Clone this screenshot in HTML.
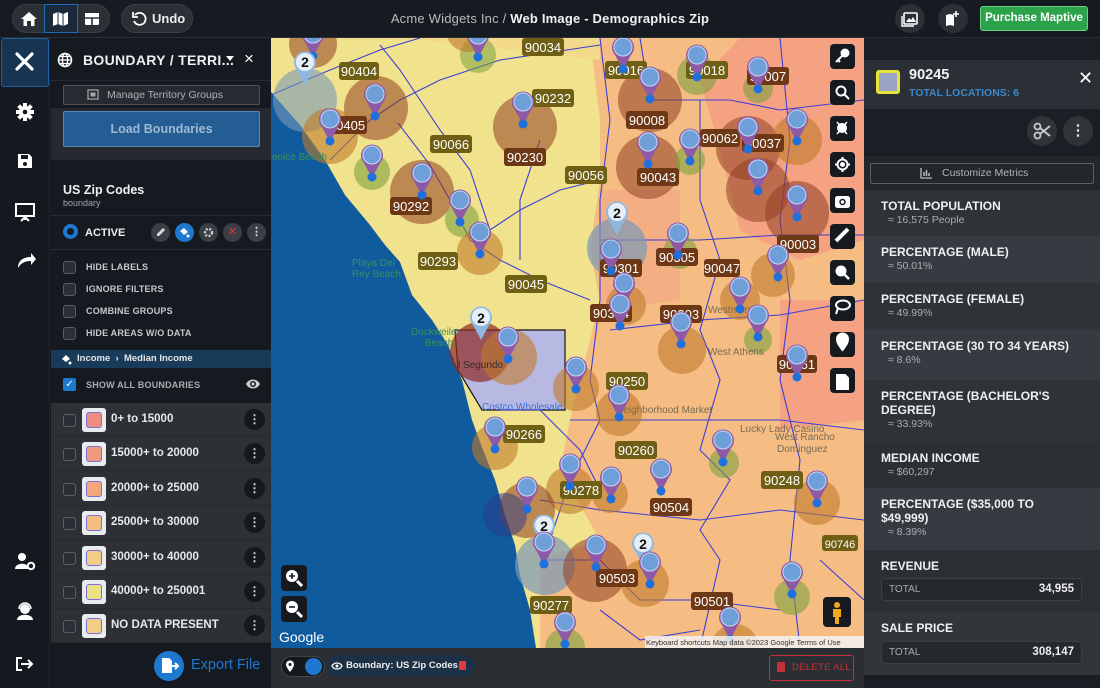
<!DOCTYPE html>
<html><head><meta charset="utf-8"><style>
*{box-sizing:border-box;margin:0;padding:0}
body{width:1100px;height:688px;overflow:hidden;background:#13181e;font-family:"Liberation Sans",sans-serif;color:#e6e8ea;position:relative}
.abs{position:absolute}
.top{left:0;top:0;width:1100px;height:38px;background:#161b21;border-bottom:1px solid #2a2f35}
.pill{background:#2b3036;border:1px solid #3a3f45;border-radius:16px}
.rail{left:0;top:38px;width:50px;height:650px;background:#14191f;border-right:1px solid #22272d}
.panel{left:51px;top:38px;width:220px;height:650px;background:#141a20}
.cb{width:13px;height:13px;border:1.5px solid #5a5f65;border-radius:3px;background:#2a2f35}
.small{font-size:9px;font-weight:bold;color:#c4c8cc;letter-spacing:.2px}
.item{left:0;width:220px;height:34px;background:#2d3136;border-bottom:1px solid #262a2f}
.sw{left:31px;top:5px;width:24px;height:24px;border-radius:3px;background:#e9ecef}
.sw i{position:absolute;left:4px;top:4px;width:16px;height:16px;border:1.5px solid #7b6fd8;border-radius:3px}
.dots{right:6px;top:6px;width:21px;height:21px;border-radius:50%;background:#15191e;color:#ddd;font-size:12px;text-align:center;line-height:21px;font-weight:bold}
.rp{left:864px;top:38px;width:236px;height:650px;background:#1a1f25}
.met{left:0;width:236px;padding:9px 0 0 17px}
.met b{display:block;font-size:12px;color:#eef0f2;line-height:14px}
.met span{display:block;font-size:10.5px;color:#a9adb2;padding-left:7px;margin-top:1px}
.tot{left:17px;width:201px;height:23px;background:#25292e;border:1px solid #3b4046;border-radius:4px;font-size:10px;color:#aaa}
.tb{left:830px;width:25px;height:25px;background:#161a1f;border-radius:4px}
</style></head><body>

<div class="abs top"></div>
<div class="abs pill" style="left:12px;top:4px;width:98px;height:29px"></div>
<div class="abs" style="left:44px;top:4px;width:34px;height:29px;background:#1b2a3a;border:1px solid #1e6bb8"></div>
<svg class="abs" style="left:19px;top:9px" width="80" height="20" viewBox="0 0 80 20">
<path d="M10 3 L2 10 H4.5 V17 H8 V12 H12 V17 H15.5 V10 H18 Z" fill="#fff"/>
<path d="M34 5 L39 3 L44 5 L49 3 V15 L44 17 L39 15 L34 17Z" fill="#fff"/><path d="M39 3V15M44 5V17" stroke="#1b2a3a" stroke-width="1"/>
<rect x="66" y="4" width="14" height="12" rx="1.5" fill="#fff"/><path d="M66 9H80M73 9V16" stroke="#2b3036" stroke-width="1.6"/><rect x="66" y="4" width="14" height="3" fill="#fff"/>
</svg>
<div class="abs pill" style="left:121px;top:4px;width:72px;height:29px;font-size:13px;font-weight:bold;line-height:27px;padding-left:30px;color:#eee">Undo</div>
<svg class="abs" style="left:131px;top:11px" width="16" height="16" viewBox="0 0 16 16"><path d="M4 4 A6 6 0 1 1 3 10" fill="none" stroke="#fff" stroke-width="1.8"/><path d="M2 1V6H7" fill="none" stroke="#fff" stroke-width="1.8"/></svg>
<div class="abs" style="left:380px;top:11px;width:340px;text-align:center;font-size:13px;color:#b8bcc0;letter-spacing:.2px">Acme Widgets Inc / <b style="color:#f2f2f2">Web Image - Demographics Zip</b></div>
<div class="abs" style="left:895px;top:4px;width:30px;height:29px;border-radius:50%;background:#2b3036"></div>
<div class="abs" style="left:938px;top:4px;width:30px;height:29px;border-radius:50%;background:#2b3036"></div>
<svg class="abs" style="left:900px;top:9px" width="70" height="20"><rect x="4" y="4" width="13" height="11" rx="1" fill="none" stroke="#fff" stroke-width="1.6"/><path d="M6 13 L9 9 L11 11 L13 8 L16 13Z" fill="#fff"/><path d="M2 7V17H14" fill="none" stroke="#fff" stroke-width="1.4"/>
<path d="M46 6 L50 5 L54 6 V17 L50 16 L46 17Z" fill="#fff"/><path d="M56 2V8M53 5H59" stroke="#fff" stroke-width="1.6"/></svg>
<div class="abs" style="left:980px;top:6px;width:108px;height:25px;background:#2ca24a;border:1px solid #6fcf86;border-radius:3px;font-size:11.5px;font-weight:bold;color:#fff;text-align:center;line-height:23px">Purchase Maptive</div>

<div class="abs rail"></div>
<div class="abs" style="left:1px;top:38px;width:48px;height:49px;background:#173553;border:1px solid #1d5f9f;border-radius:3px"></div>
<svg class="abs" style="left:0;top:38px" width="50" height="650" viewBox="0 0 50 650">
<path d="M17 16 L32 31 M32 16 L17 31" stroke="#fff" stroke-width="3.2" stroke-linecap="round"/>
<g fill="#fff"><circle cx="25" cy="74" r="6"/><rect x="23" y="65" width="4" height="18"/><rect x="16" y="72" width="18" height="4"/><rect x="23" y="65" width="4" height="18" transform="rotate(45 25 74)"/><rect x="23" y="65" width="4" height="18" transform="rotate(-45 25 74)"/></g><circle cx="25" cy="74" r="2.3" fill="#14191f"/>
<path d="M18 116 H29 L32 119 V130 H18Z" fill="#fff"/><rect x="21" y="117" width="7" height="4" fill="#14191f"/><circle cx="25" cy="126" r="2" fill="#14191f"/>
<rect x="16" y="166" width="18" height="12" fill="none" stroke="#fff" stroke-width="2"/><path d="M25 178 V182 M21 183 L25 179 L29 183" stroke="#fff" stroke-width="2" fill="none"/>
<path d="M18 230 C18 222 24 219 31 219 V215 L36 221 L31 227 V223 C25 223 21 225 18 230Z" fill="#fff"/>
<circle cx="22" cy="519" r="4" fill="#fff"/><path d="M15 531 C15 524 29 524 29 531Z" fill="#fff"/><circle cx="31" cy="528" r="3.2" fill="none" stroke="#fff" stroke-width="2"/>
<circle cx="25" cy="571" r="5" fill="#fff"/><path d="M17 582 C17 575 33 575 33 582Z" fill="#fff"/><path d="M19 571 A6 6 0 0 1 31 571" fill="none" stroke="#fff" stroke-width="1.5"/>
<path d="M22 620 H17 V632 H22" fill="none" stroke="#fff" stroke-width="2"/><path d="M21 626 H32 M28 622 L32 626 L28 630" fill="none" stroke="#fff" stroke-width="2"/>
</svg>

<div class="abs panel">
  <svg class="abs" style="left:6px;top:14px" width="16" height="16" viewBox="0 0 16 16"><circle cx="8" cy="8" r="6.5" fill="none" stroke="#fff" stroke-width="1.6"/><ellipse cx="8" cy="8" rx="2.6" ry="6.5" fill="none" stroke="#fff" stroke-width="1.4"/><path d="M1.5 8H14.5M3 4.5H13M3 11.5H13" stroke="#fff" stroke-width="1.2"/></svg>
  <div class="abs" style="left:32px;top:14px;font-size:14px;font-weight:bold;color:#f0f0f0;letter-spacing:.3px">BOUNDARY / TERRI...</div>
  <div class="abs" style="left:175px;top:18px;width:0;height:0;border-left:4px solid transparent;border-right:4px solid transparent;border-top:5px solid #fff"></div>
  <div class="abs" style="left:193px;top:11px;font-size:17px;color:#fff">×</div>
  <div class="abs" style="left:0;top:42px;width:220px;height:1px;background:#272c32"></div>
  <div class="abs" style="left:12px;top:47px;width:197px;height:20px;border:1px solid #4f545a;background:#262b31;border-radius:2px;font-size:10.5px;color:#aeb2b6;line-height:18px;padding-left:43px">Manage Territory Groups</div>
  <svg class="abs" style="left:36px;top:51px" width="12" height="11"><rect x="1" y="1" width="10" height="9" fill="none" stroke="#aaa" stroke-width="1.2"/><rect x="3.5" y="3.5" width="5" height="4" fill="#aaa"/></svg>
  <div class="abs" style="left:0;top:70px;width:220px;height:52px;background:#262a30"></div>
  <div class="abs" style="left:12px;top:73px;width:197px;height:36px;background:#245d94;border:1px solid #5488b8;border-radius:2px;font-size:12.5px;font-weight:bold;color:#9fb9d2;text-align:center;line-height:34px">Load Boundaries</div>
  <div class="abs" style="left:12px;top:145px;font-size:12.5px;font-weight:bold;color:#f0f0f0">US Zip Codes</div>
  <div class="abs" style="left:12px;top:160px;font-size:9px;color:#a2a6aa">boundary</div>
  <div class="abs" style="left:0;top:177px;width:220px;height:1px;background:#272c32"></div>
  <div class="abs" style="left:12px;top:186px;width:15px;height:15px;border-radius:50%;border:4px solid #1e78d0"></div>
  <div class="abs" style="left:34px;top:189px;font-size:11px;font-weight:bold;color:#eee">ACTIVE</div>
  <div class="abs" style="left:100px;top:185px;width:19px;height:19px;border-radius:50%;background:#3a3f45"></div>
  <div class="abs" style="left:124px;top:185px;width:19px;height:19px;border-radius:50%;background:#1e78d0"></div>
  <div class="abs" style="left:148px;top:185px;width:19px;height:19px;border-radius:50%;background:#3a3f45"></div>
  <div class="abs" style="left:172px;top:185px;width:19px;height:19px;border-radius:50%;background:#3a3f45;color:#e0353a;font-size:11px;text-align:center;line-height:19px">✕</div>
  <div class="abs" style="left:196px;top:185px;width:19px;height:19px;border-radius:50%;background:#3a3f45;color:#ddd;font-size:11px;text-align:center;line-height:19px;font-weight:bold">⋮</div>
  <svg class="abs" style="left:100px;top:185px" width="80" height="19"><path d="M6 13 L6 11 L12 5 L14 7 L8 13Z" fill="#ddd"/><path d="M29 8 L33 5 L37 9 L33 12Z" fill="#fff"/><circle cx="37" cy="13" r="1.5" fill="#fff"/><circle cx="57.5" cy="9.5" r="3.5" fill="none" stroke="#ccc" stroke-width="2.4" stroke-dasharray="2 1.4"/></svg>
  <div class="abs" style="left:0;top:211px;width:220px;height:1px;background:#272c32"></div>
  <div class="abs cb" style="left:12px;top:223px"></div><div class="abs small" style="left:35px;top:224px">HIDE LABELS</div>
  <div class="abs cb" style="left:12px;top:245px"></div><div class="abs small" style="left:35px;top:246px">IGNORE FILTERS</div>
  <div class="abs cb" style="left:12px;top:267px"></div><div class="abs small" style="left:35px;top:268px">COMBINE GROUPS</div>
  <div class="abs cb" style="left:12px;top:289px"></div><div class="abs small" style="left:35px;top:290px">HIDE AREAS W/O DATA</div>
  <div class="abs" style="left:0;top:312px;width:220px;height:18px;background:#183b5a;font-size:9.5px;font-weight:bold;color:#e6e6e6;line-height:18px;padding-left:26px">Income &nbsp;›&nbsp; Median Income</div>
  <svg class="abs" style="left:9px;top:315px" width="12" height="12"><path d="M2 6 L6 2 L10 6 L6 9Z" fill="#fff"/><circle cx="10" cy="10" r="1.5" fill="#fff"/></svg>
  <div class="abs" style="left:12px;top:340px;width:13px;height:13px;background:#1e78d0;border-radius:2px;color:#fff;font-size:10px;text-align:center;line-height:13px">✓</div>
  <div class="abs small" style="left:35px;top:342px;color:#a8acb0">SHOW ALL BOUNDARIES</div>
  <svg class="abs" style="left:194px;top:340px" width="16" height="12"><path d="M1 6 C4 0 12 0 15 6 C12 12 4 12 1 6Z" fill="#ccc"/><circle cx="8" cy="6" r="3" fill="#141a20"/><circle cx="8" cy="6" r="1.6" fill="#ccc"/></svg>
  <div class="abs" style="left:0;top:365px;width:220px;height:240px;background:#2d3136"></div>
</div>
<div class="abs" style="left:51px;top:403px;width:220px;height:240px">
 <div class="abs item" style="top:0"><div class="abs cb" style="left:12px;top:11px"></div><div class="abs sw"><i style="background:#ee8d80"></i></div><div class="abs" style="left:60px;top:10px;font-size:11.5px;font-weight:bold">0+ to 15000</div><div class="abs dots">⋮</div></div>
 <div class="abs item" style="top:34.4px"><div class="abs cb" style="left:12px;top:11px"></div><div class="abs sw"><i style="background:#ef9a7e"></i></div><div class="abs" style="left:60px;top:10px;font-size:11.5px;font-weight:bold">15000+ to 20000</div><div class="abs dots">⋮</div></div>
 <div class="abs item" style="top:68.8px"><div class="abs cb" style="left:12px;top:11px"></div><div class="abs sw"><i style="background:#f2a77d"></i></div><div class="abs" style="left:60px;top:10px;font-size:11.5px;font-weight:bold">20000+ to 25000</div><div class="abs dots">⋮</div></div>
 <div class="abs item" style="top:103.2px"><div class="abs cb" style="left:12px;top:11px"></div><div class="abs sw"><i style="background:#f3bd80"></i></div><div class="abs" style="left:60px;top:10px;font-size:11.5px;font-weight:bold">25000+ to 30000</div><div class="abs dots">⋮</div></div>
 <div class="abs item" style="top:137.6px"><div class="abs cb" style="left:12px;top:11px"></div><div class="abs sw"><i style="background:#f1cd85"></i></div><div class="abs" style="left:60px;top:10px;font-size:11.5px;font-weight:bold">30000+ to 40000</div><div class="abs dots">⋮</div></div>
 <div class="abs item" style="top:172px"><div class="abs cb" style="left:12px;top:11px"></div><div class="abs sw"><i style="background:#ece086"></i></div><div class="abs" style="left:60px;top:10px;font-size:11.5px;font-weight:bold">40000+ to 250001</div><div class="abs dots">⋮</div></div>
 <div class="abs item" style="top:206.4px"><div class="abs cb" style="left:12px;top:11px"></div><div class="abs sw"><i style="background:#f1cd85"></i></div><div class="abs" style="left:60px;top:10px;font-size:11.5px;font-weight:bold">NO DATA PRESENT</div><div class="abs dots">⋮</div></div>
</div>
<div class="abs" style="left:154px;top:651px;width:30px;height:30px;border-radius:50%;background:#1e78d0"></div>
<svg class="abs" style="left:160px;top:657px" width="20" height="18"><path d="M2 1 H9 L12 4 V16 H2Z" fill="#fff"/><path d="M10 9 H18 M15 6 L18 9 L15 12" stroke="#fff" stroke-width="2" fill="none"/></svg>
<div class="abs" style="left:191px;top:657px;font-size:14.5px;color:#1e78d0">Export File</div>

<svg class="abs" style="left:271px;top:38px" width="593" height="610" viewBox="271 38 593 610">
<defs>
<g id="p"><path d="M0,0 L-8,-15 A11,11 0 1 1 8,-15 Z" fill="#8e5aa8"/><circle cx="0" cy="-23" r="9" fill="#6f9fd8"/><circle cx="0" cy="-23" r="9" fill="none" stroke="#c9d9f0" stroke-width="1"/><circle cx="0" cy="-1" r="4.5" fill="#1f6fdc"/></g>
<g id="p2"><path d="M0,0 L-8,-15 A11,11 0 1 1 8,-15 Z" fill="#8fb7e0"/><circle cx="0" cy="-23" r="9" fill="#e6eef8"/></g>
</defs>
<rect x="271" y="38" width="593" height="610" fill="#f1e38d"/>
<path d="M590 38 H864 V648 H540 L540 560 L600 540 L560 470 L570 420 L600 300 L590 250 L600 180 L600 120Z" fill="#f5bd84"/>
<path d="M740 38 H864 V240 L800 260 L740 230 L720 150 L700 80Z" fill="#f5a283"/>
<path d="M780 300 H864 V420 L780 430Z" fill="#f5a283"/>
<path d="M600 190 H680 V300 L600 310Z" fill="#f4ae84"/>
<path d="M285 38 H600 V60 L420 40Z" fill="#f3d98a"/>
<path d="M271 92 L300 125 L325 160 L345 195 L370 225 L385 245 L400 262 L412 295 L432 320 L448 345 L462 380 L472 420 L483 450 L495 480 L505 515 L515 545 L520 575 L530 610 L536 648 L271 648Z" fill="#0f5b9e"/>
<path d="M455 330 L565 330 L565 410 L482 410 L458 370Z" fill="#b8b9e2" stroke="#111" stroke-width="1.2"/>
<g fill="none" stroke="#3d3fd6" stroke-width="1.1">
<path d="M271 95 L330 70 L380 50 L420 38"/><path d="M330 160 L370 120 L400 100 L440 80 L500 60 L600 45"/>
<path d="M380 45 L400 70 L420 100 L440 130 L470 170 L490 230 L520 210 L560 190 L600 180"/>
<path d="M398 123 L430 165 L450 200 L470 240 L500 260 L540 280 L590 300"/>
<path d="M600 38 L610 120 L600 200 L600 300 L590 380 L600 420 L570 480 L550 540"/>
<path d="M640 38 L650 100 L700 100 L730 100 L780 110 L864 100"/>
<path d="M700 100 L700 200 L720 260 L700 330 L720 380 L700 450 L730 480 L700 530 L720 560 L700 648"/>
<path d="M780 38 L790 140 L780 220 L790 300 L780 380 L800 460 L790 560 L800 648"/>
<path d="M600 240 H700 L780 235 H864"/><path d="M610 330 L700 320 L780 315 L864 300"/>
<path d="M570 420 H700 L780 420 L864 430"/><path d="M540 500 L600 510 L700 520 L780 510 L864 520"/>
<path d="M500 410 L540 410 L580 450 L600 490"/><path d="M540 560 L600 560 L640 600 L700 600 L780 610"/>
<path d="M600 610 L640 640 L700 630"/><path d="M820 560 L864 600"/><path d="M540 140 L520 200 L520 260"/>
</g>
<g>
<circle cx="313" cy="44" r="24" fill="#8f3f22" fill-opacity=".55"/>
<circle cx="305" cy="100" r="32" fill="#7a98b8" fill-opacity=".6"/>
<circle cx="376" cy="108" r="32" fill="#8f3f22" fill-opacity=".55"/>
<circle cx="330" cy="136" r="28" fill="#c07a2a" fill-opacity=".6"/>
<circle cx="372" cy="172" r="18" fill="#7da040" fill-opacity=".6"/>
<circle cx="422" cy="192" r="32" fill="#8f3f22" fill-opacity=".55"/>
<circle cx="462" cy="220" r="17" fill="#7da040" fill-opacity=".6"/>
<circle cx="480" cy="252" r="23" fill="#c07a2a" fill-opacity=".6"/>
<circle cx="478" cy="55" r="18" fill="#7da040" fill-opacity=".55"/>
<circle cx="525" cy="127" r="32" fill="#8f3f22" fill-opacity=".55"/>
<circle cx="468" cy="30" r="22" fill="#c07a2a" fill-opacity=".6"/>
<circle cx="650" cy="100" r="32" fill="#8f3f22" fill-opacity=".55"/>
<circle cx="697" cy="75" r="20" fill="#7da040" fill-opacity=".6"/>
<circle cx="758" cy="88" r="15" fill="#7da040" fill-opacity=".6"/>
<circle cx="648" cy="167" r="32" fill="#8f3f22" fill-opacity=".55"/>
<circle cx="690" cy="160" r="15" fill="#7da040" fill-opacity=".6"/>
<circle cx="748" cy="148" r="32" fill="#8f3f22" fill-opacity=".55"/>
<circle cx="797" cy="140" r="25" fill="#c07a2a" fill-opacity=".6"/>
<circle cx="758" cy="190" r="32" fill="#8f3f22" fill-opacity=".55"/>
<circle cx="797" cy="213" r="32" fill="#8f3f22" fill-opacity=".55"/>
<circle cx="617" cy="248" r="30" fill="#7a98b8" fill-opacity=".7"/>
<circle cx="680" cy="252" r="17" fill="#7da040" fill-opacity=".6"/>
<circle cx="626" cy="305" r="20" fill="#c07a2a" fill-opacity=".6"/>
<circle cx="682" cy="350" r="24" fill="#c07a2a" fill-opacity=".6"/>
<circle cx="758" cy="340" r="14" fill="#7da040" fill-opacity=".6"/>
<circle cx="740" cy="300" r="20" fill="#c07a2a" fill-opacity=".6"/>
<circle cx="773" cy="275" r="22" fill="#c07a2a" fill-opacity=".6"/>
<circle cx="480" cy="352" r="30" fill="#8f2a22" fill-opacity=".7"/>
<circle cx="509" cy="357" r="28" fill="#c07a2a" fill-opacity=".6"/>
<circle cx="576" cy="388" r="23" fill="#c07a2a" fill-opacity=".6"/>
<circle cx="619" cy="413" r="23" fill="#c07a2a" fill-opacity=".6"/>
<circle cx="495" cy="447" r="23" fill="#c07a2a" fill-opacity=".6"/>
<circle cx="570" cy="490" r="24" fill="#c07a2a" fill-opacity=".6"/>
<circle cx="610" cy="495" r="18" fill="#c07a2a" fill-opacity=".6"/>
<circle cx="724" cy="463" r="15" fill="#7da040" fill-opacity=".6"/>
<circle cx="817" cy="502" r="23" fill="#c07a2a" fill-opacity=".6"/>
<circle cx="527" cy="510" r="28" fill="#8f3f22" fill-opacity=".55"/>
<circle cx="505" cy="515" r="22" fill="#2a3a8a" fill-opacity=".5"/>
<circle cx="545" cy="565" r="30" fill="#7a98b8" fill-opacity=".7"/>
<circle cx="595" cy="570" r="32" fill="#8f3f22" fill-opacity=".55"/>
<circle cx="645" cy="583" r="24" fill="#c07a2a" fill-opacity=".6"/>
<circle cx="792" cy="597" r="18" fill="#7da040" fill-opacity=".6"/>
<circle cx="735" cy="648" r="24" fill="#c07a2a" fill-opacity=".6"/>
<circle cx="565" cy="648" r="20" fill="#7da040" fill-opacity=".6"/>
</g>
<g font-family="Liberation Sans, sans-serif" font-size="13" fill="#fff" text-anchor="middle">
<g fill="#6e5f14"><rect x="339" y="62" width="40" height="18" rx="3"/><rect x="522" y="38" width="42" height="18" rx="3"/><rect x="605" y="61" width="42" height="18" rx="3"/><rect x="686" y="61" width="42" height="18" rx="3"/><rect x="532" y="89" width="42" height="18" rx="3"/><rect x="430" y="135" width="42" height="18" rx="3"/><rect x="565" y="166" width="42" height="18" rx="3"/><rect x="418" y="252" width="40" height="18" rx="3"/><rect x="505" y="275" width="42" height="18" rx="3"/><rect x="606" y="372" width="42" height="18" rx="3"/><rect x="503" y="425" width="42" height="18" rx="3"/><rect x="615" y="441" width="42" height="18" rx="3"/><rect x="560" y="481" width="42" height="18" rx="3"/><rect x="761" y="471" width="42" height="18" rx="3"/><rect x="822" y="535" width="36" height="16" rx="3"/><rect x="530" y="596" width="42" height="18" rx="3"/></g>
<g fill="#6e3816"><rect x="747" y="67" width="42" height="18" rx="3"/><rect x="327" y="116" width="40" height="18" rx="3"/><rect x="626" y="111" width="42" height="18" rx="3"/><rect x="700" y="129" width="40" height="18" rx="3"/><rect x="742" y="134" width="42" height="18" rx="3"/><rect x="504" y="148" width="42" height="18" rx="3"/><rect x="637" y="168" width="42" height="18" rx="3"/><rect x="390" y="197" width="42" height="18" rx="3"/><rect x="777" y="235" width="42" height="18" rx="3"/><rect x="656" y="248" width="42" height="18" rx="3"/><rect x="704" y="259" width="36" height="18" rx="3"/><rect x="600" y="259" width="42" height="18" rx="3"/><rect x="590" y="304" width="42" height="18" rx="3"/><rect x="660" y="305" width="42" height="18" rx="3"/><rect x="777" y="355" width="40" height="18" rx="3"/><rect x="650" y="498" width="42" height="18" rx="3"/><rect x="596" y="569" width="42" height="18" rx="3"/><rect x="691" y="592" width="42" height="18" rx="3"/></g>
<text x="359" y="76">90404</text><text x="543" y="52">90034</text><text x="626" y="75">90016</text><text x="707" y="75">90018</text><text x="768" y="81">90007</text><text x="347" y="130">90405</text><text x="553" y="103">90232</text><text x="647" y="125">90008</text><text x="451" y="149">90066</text><text x="720" y="143">90062</text><text x="763" y="148">90037</text><text x="525" y="162">90230</text><text x="586" y="180">90056</text><text x="658" y="182">90043</text><text x="411" y="211">90292</text><text x="438" y="266">90293</text><text x="526" y="289">90045</text><text x="798" y="249">90003</text><text x="677" y="262">90305</text><text x="722" y="273">90047</text><text x="621" y="273">90301</text><text x="611" y="318">90304</text><text x="681" y="319">90303</text><text x="797" y="369">90061</text><text x="627" y="386">90250</text><text x="524" y="439">90266</text><text x="636" y="455">90260</text><text x="581" y="495">90278</text><text x="782" y="485">90248</text><text x="671" y="512">90504</text><text x="840" y="548" font-size="11">90746</text><text x="617" y="583">90503</text><text x="551" y="610">90277</text><text x="712" y="606">90501</text>
</g>
<g font-family="Liberation Sans, sans-serif" font-size="10" fill="#3d8f5a"><text x="352" y="266">Playa Del</text><text x="352" y="277">Rey Beach</text><text x="411" y="335">Dockweiler</text><text x="425" y="346">Beach</text><text x="272" y="160">enice Beach</text></g>
<g font-family="Liberation Sans, sans-serif" font-size="10" fill="#7a6a50"><text x="708" y="313">Westmont</text><text x="708" y="355">West Athens</text><text x="616" y="413">Neighborhood Market</text><text x="740" y="432">Lucky Lady Casino</text><text x="775" y="440">West Rancho</text><text x="777" y="452">Dominguez</text><text x="482" y="410" fill="#3f6fd6">Costco Wholesale</text><text x="458" y="368" fill="#3a2a2a">l Segundo</text></g>
<use href="#p" x="313" y="57"/><use href="#p2" x="305" y="85"/><use href="#p" x="375" y="117"/><use href="#p" x="330" y="142"/><use href="#p" x="372" y="178"/><use href="#p" x="422" y="196"/><use href="#p" x="460" y="223"/><use href="#p" x="480" y="255"/><use href="#p" x="478" y="58"/><use href="#p" x="523" y="125"/><use href="#p" x="623" y="70"/><use href="#p" x="650" y="100"/><use href="#p" x="697" y="78"/><use href="#p" x="758" y="90"/><use href="#p" x="648" y="165"/><use href="#p" x="690" y="162"/><use href="#p" x="748" y="150"/><use href="#p" x="797" y="142"/><use href="#p" x="758" y="192"/><use href="#p" x="797" y="218"/><use href="#p2" x="617" y="235"/><use href="#p" x="611" y="272"/><use href="#p" x="678" y="256"/><use href="#p" x="624" y="306"/><use href="#p" x="620" y="327"/><use href="#p" x="681" y="345"/><use href="#p" x="740" y="310"/><use href="#p" x="758" y="338"/><use href="#p" x="797" y="378"/><use href="#p" x="778" y="278"/><use href="#p2" x="481" y="340"/><use href="#p" x="508" y="360"/><use href="#p" x="576" y="390"/><use href="#p" x="619" y="418"/><use href="#p" x="495" y="450"/><use href="#p" x="570" y="487"/><use href="#p" x="611" y="500"/><use href="#p" x="661" y="492"/><use href="#p" x="723" y="463"/><use href="#p" x="817" y="504"/><use href="#p" x="527" y="510"/><use href="#p2" x="544" y="548"/><use href="#p" x="544" y="565"/><use href="#p" x="596" y="568"/><use href="#p2" x="643" y="566"/><use href="#p" x="650" y="585"/><use href="#p" x="792" y="595"/><use href="#p" x="730" y="640"/><use href="#p" x="565" y="645"/>
<g font-family="Liberation Sans, sans-serif" font-size="14" font-weight="bold" fill="#111" text-anchor="middle"><text x="305" y="67">2</text><text x="617" y="218">2</text><text x="481" y="323">2</text><text x="544" y="531">2</text><text x="643" y="549">2</text></g>
<rect x="281" y="565" width="26" height="26" rx="4" fill="#161a1f"/><rect x="281" y="596" width="26" height="26" rx="4" fill="#161a1f"/>
<circle cx="292" cy="576" r="6" fill="#fff"/><path d="M297 581 L302 586" stroke="#fff" stroke-width="3"/><path d="M289 576H295M292 573V579" stroke="#161a1f" stroke-width="1.6"/>
<circle cx="292" cy="607" r="6" fill="#fff"/><path d="M297 612 L302 617" stroke="#fff" stroke-width="3"/><path d="M289 607H295" stroke="#161a1f" stroke-width="1.6"/>
<text x="279" y="642" font-family="Liberation Sans, sans-serif" font-size="14" fill="#fff">Google</text>
<rect x="823" y="597" width="28" height="30" rx="4" fill="#161a1f"/><circle cx="837" cy="605" r="3" fill="#f2a81d"/><path d="M833 609H841V617H839V624H835V617H833Z" fill="#f2a81d"/>
<rect x="645" y="636" width="219" height="12" fill="#f2f2f2" fill-opacity=".85"/>
<text x="646" y="645" font-family="Liberation Sans, sans-serif" font-size="7.5" fill="#333">Keyboard shortcuts   Map data ©2023 Google   Terms of Use</text>
</svg>
<div class="abs tb" style="top:44px"></div><div class="abs tb" style="top:80px"></div><div class="abs tb" style="top:116px"></div><div class="abs tb" style="top:152px"></div><div class="abs tb" style="top:188px"></div><div class="abs tb" style="top:224px"></div><div class="abs tb" style="top:260px"></div><div class="abs tb" style="top:296px"></div><div class="abs tb" style="top:332px"></div><div class="abs tb" style="top:368px"></div>
<svg class="abs" style="left:830px;top:44px" width="25" height="350" viewBox="0 0 25 350">
<g fill="none" stroke="#fff" stroke-width="2">
<circle cx="15" cy="9" r="3.5" fill="#fff"/><path d="M13 11 L6 18 M8 16 L10 18"/>
<circle cx="11" cy="47" r="4.5"/><path d="M14 50 L19 55"/>
<circle cx="12" cy="84" r="4" fill="#fff"/><path d="M7 78 L17 90 M17 78 L7 90" stroke-width="1.5"/>
<circle cx="12.5" cy="120.5" r="5"/><circle cx="12.5" cy="120.5" r="1.5" fill="#fff"/><path d="M12.5 113V116M12.5 125V128M5 120.5H8M17 120.5H20"/>
<rect x="6" y="153" width="13" height="10" rx="1.5" fill="#fff"/><circle cx="12.5" cy="158" r="2.5" stroke="#161a1f" stroke-width="1.5"/>
<path d="M6 197 L18 185" stroke-width="4"/>
<circle cx="11" cy="227" r="4.5" fill="#fff"/><path d="M14 230 L19 235" stroke-width="2.5"/>
<ellipse cx="13" cy="261" rx="7" ry="4.5"/><path d="M8 264 L6 270"/>
<path d="M12.5 306 C8 300 7 298 7 295 A5.5 5.5 0 0 1 18 295 C18 298 17 300 12.5 306Z" fill="#fff"/>
<path d="M7 331 H15 L18 334 V345 H7Z" fill="#fff"/>
</g></svg>

<div class="abs" style="left:271px;top:648px;width:593px;height:40px;background:#2b2f34"></div>
<div class="abs" style="left:281px;top:656px;width:44px;height:21px;border-radius:11px;background:#15191e;border:1px solid #444"></div>
<div class="abs" style="left:305px;top:658px;width:17px;height:17px;border-radius:50%;background:#1e78d0"></div>
<svg class="abs" style="left:285px;top:660px" width="10" height="13"><path d="M5 12 C2 8 1 6 1 4.5 A4 4 0 0 1 9 4.5 C9 6 8 8 5 12Z" fill="#fff"/><circle cx="5" cy="4.5" r="1.5" fill="#15191e"/></svg>
<div class="abs" style="left:327px;top:655px;width:148px;height:22px;border-radius:11px;background:#1d3146;font-size:9.5px;font-weight:bold;color:#eee;line-height:22px;padding-left:19px">Boundary: US Zip Codes</div>
<svg class="abs" style="left:331px;top:661px" width="12" height="10"><path d="M1 5 C3 1 9 1 11 5 C9 9 3 9 1 5Z" fill="none" stroke="#fff" stroke-width="1.3"/><circle cx="6" cy="5" r="1.5" fill="#fff"/></svg>
<div class="abs" style="left:459px;top:661px;width:7px;height:9px;background:#e03a44;border-radius:1px"></div>
<div class="abs" style="left:769px;top:655px;width:85px;height:26px;border:1.5px solid #c2313a;border-radius:3px;font-size:9.5px;color:#c2313a;line-height:23px;padding-left:22px;letter-spacing:.3px">DELETE ALL</div>
<div class="abs" style="left:777px;top:662px;width:8px;height:10px;background:#c2313a;border-radius:1px"></div>

<div class="abs rp">
  <div class="abs" style="left:0;top:22px;width:236px;height:49px;background:#2b3036"></div>
  <div class="abs" style="left:12px;top:32px;width:24px;height:24px;border:3px solid #e8e33a;border-radius:3px;background:#9aa3c4"></div>
  <div class="abs" style="left:45px;top:29px;font-size:14.5px;font-weight:bold;color:#f2f2f2">90245</div>
  <div class="abs" style="left:45px;top:49px;font-size:10.5px;font-weight:bold;color:#3d87cc">TOTAL LOCATIONS: 6</div>
  <div class="abs" style="left:214px;top:30px;font-size:18px;color:#fff">✕</div>
  <div class="abs" style="left:163px;top:78px;width:30px;height:30px;border-radius:50%;background:#2f3439"></div>
  <div class="abs" style="left:199px;top:78px;width:30px;height:30px;border-radius:50%;background:#2f3439;color:#ddd;font-size:15px;font-weight:bold;text-align:center;line-height:30px">⋮</div>
  <svg class="abs" style="left:169px;top:84px" width="18" height="18"><circle cx="4.5" cy="4.5" r="3" fill="none" stroke="#ccc" stroke-width="1.8"/><circle cx="4.5" cy="13.5" r="3" fill="none" stroke="#ccc" stroke-width="1.8"/><path d="M7 6 L17 14 M7 12 L17 4" stroke="#ccc" stroke-width="1.8"/></svg>
  <div class="abs" style="left:0;top:118px;width:236px;height:34px;background:#22272c"></div>
  <div class="abs" style="left:6px;top:125px;width:224px;height:21px;border:1px solid #5a5f65;border-radius:2px;font-size:10.5px;color:#b0b4b8;line-height:19px;padding-left:71px">Customize Metrics</div>
  <svg class="abs" style="left:56px;top:130px" width="12" height="11"><path d="M1 0V10H12" stroke="#bbb" stroke-width="1.3" fill="none"/><path d="M4 8V4M6.5 8V2M9 8V5" stroke="#bbb" stroke-width="1.5"/></svg>
  <div class="abs met" style="top:152px;height:46px;background:#2e3338"><b>TOTAL POPULATION</b><span>≈ 16,575 People</span></div>
  <div class="abs met" style="top:198px;height:47px;background:#363b41"><b>PERCENTAGE (MALE)</b><span>≈ 50.01%</span></div>
  <div class="abs met" style="top:245px;height:47px;background:#2e3338"><b>PERCENTAGE (FEMALE)</b><span>≈ 49.99%</span></div>
  <div class="abs met" style="top:292px;height:50px;background:#363b41"><b>PERCENTAGE (30 TO 34 YEARS)</b><span>≈ 8.6%</span></div>
  <div class="abs met" style="top:342px;height:62px;background:#2e3338"><b>PERCENTAGE (BACHELOR'S<br>DEGREE)</b><span>≈ 33.93%</span></div>
  <div class="abs met" style="top:404px;height:46px;background:#2b3035"><b>MEDIAN INCOME</b><span>≈ $60,297</span></div>
  <div class="abs met" style="top:450px;height:62px;background:#363b41"><b>PERCENTAGE ($35,000 TO<br>$49,999)</b><span>≈ 8.39%</span></div>
  <div class="abs met" style="top:512px;height:62px;background:#2b3035"><b>REVENUE</b></div>
  <div class="abs tot" style="top:540px"><span class="abs" style="left:7px;top:5px">TOTAL</span><span class="abs" style="right:7px;top:4px;font-size:11.5px;font-weight:bold;color:#eee">34,955</span></div>
  <div class="abs met" style="top:574px;height:63px;background:#31363b"><b>SALE PRICE</b></div>
  <div class="abs tot" style="top:603px"><span class="abs" style="left:7px;top:5px">TOTAL</span><span class="abs" style="right:7px;top:4px;font-size:11.5px;font-weight:bold;color:#eee">308,147</span></div>
</div>
</body></html>
